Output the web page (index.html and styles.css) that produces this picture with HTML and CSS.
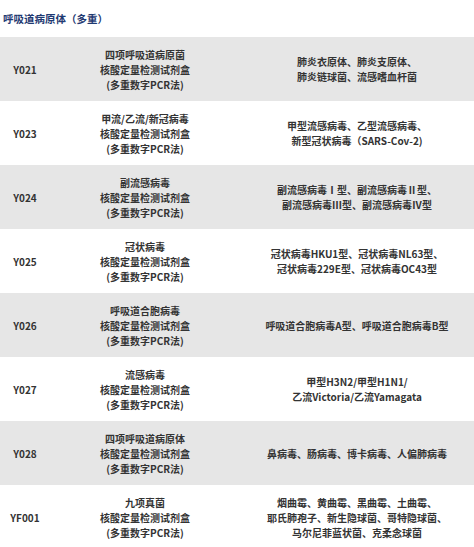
FILE: index.html
```html
<!DOCTYPE html>
<html lang="zh">
<head>
<meta charset="utf-8">
<link rel="stylesheet" href="styles.css">
</head>
<body>
<div class="page">
  <h2 class="title">呼吸道病原体（多重）</h2>
  <table class="products">
    <tr class="row alt">
      <td class="code">Y021</td>
      <td class="name">四项呼吸道病原菌<br>核酸定量检测试剂盒<br>(多重数字PCR法)</td>
      <td class="targets">肺炎衣原体、肺炎支原体、<br>肺炎链球菌、流感嗜血杆菌</td>
    </tr>
    <tr class="row">
      <td class="code">Y023</td>
      <td class="name">甲流/乙流/新冠病毒<br>核酸定量检测试剂盒<br>(多重数字PCR法)</td>
      <td class="targets">甲型流感病毒、乙型流感病毒、<br>新型冠状病毒（SARS-Cov-2)</td>
    </tr>
    <tr class="row alt">
      <td class="code">Y024</td>
      <td class="name">副流感病毒<br>核酸定量检测试剂盒<br>(多重数字PCR法)</td>
      <td class="targets">副流感病毒Ⅰ型、副流感病毒Ⅱ型、<br>副流感病毒Ⅲ型、副流感病毒Ⅳ型</td>
    </tr>
    <tr class="row">
      <td class="code">Y025</td>
      <td class="name">冠状病毒<br>核酸定量检测试剂盒<br>(多重数字PCR法)</td>
      <td class="targets">冠状病毒HKU1型、冠状病毒NL63型、<br>冠状病毒229E型、冠状病毒OC43型</td>
    </tr>
    <tr class="row alt">
      <td class="code">Y026</td>
      <td class="name">呼吸道合胞病毒<br>核酸定量检测试剂盒<br>(多重数字PCR法)</td>
      <td class="targets">呼吸道合胞病毒A型、呼吸道合胞病毒B型</td>
    </tr>
    <tr class="row">
      <td class="code">Y027</td>
      <td class="name">流感病毒<br>核酸定量检测试剂盒<br>(多重数字PCR法)</td>
      <td class="targets">甲型H3N2/甲型H1N1/<br>乙流Victoria/乙流Yamagata</td>
    </tr>
    <tr class="row alt">
      <td class="code">Y028</td>
      <td class="name">四项呼吸道病原体<br>核酸定量检测试剂盒<br>(多重数字PCR法)</td>
      <td class="targets">鼻病毒、肠病毒、博卡病毒、人偏肺病毒</td>
    </tr>
    <tr class="row">
      <td class="code">YF001</td>
      <td class="name">九项真菌<br>核酸定量检测试剂盒<br>(多重数字PCR法)</td>
      <td class="targets">烟曲霉、黄曲霉、黑曲霉、土曲霉、<br>耶氏肺孢子、新生隐球菌、哥特隐球菌、<br>马尔尼菲蓝状菌、克柔念球菌</td>
    </tr>
  </table>
</div>
</body>
</html>
```

FILE: styles.css
```css
html, body {
  margin: 0;
  padding: 0;
  background: #ffffff;
}

.page {
  width: 474px;
  font-family: "Noto Sans CJK SC", "Noto Sans", sans-serif;
}

.title {
  margin: 0;
  height: 37px;
  line-height: 38px;
  padding-left: 3px;
  font-size: 10.5px;
  font-weight: 700;
  color: #1f3a72;
}

.products {
  width: 474px;
  border-collapse: collapse;
  table-layout: fixed;
}

.row {
  height: 64px;
  background: #ffffff;
}

.row.alt {
  background: #e6e6e6;
}

.products td {
  padding: 0;
  text-align: center;
  vertical-align: middle;
  font-size: 10px;
  line-height: 15px;
  font-weight: 700;
  color: #333333;
}

.code {
  width: 50px;
}

.name {
  width: 190px;
}

.targets {
  width: 234px;
}
```
